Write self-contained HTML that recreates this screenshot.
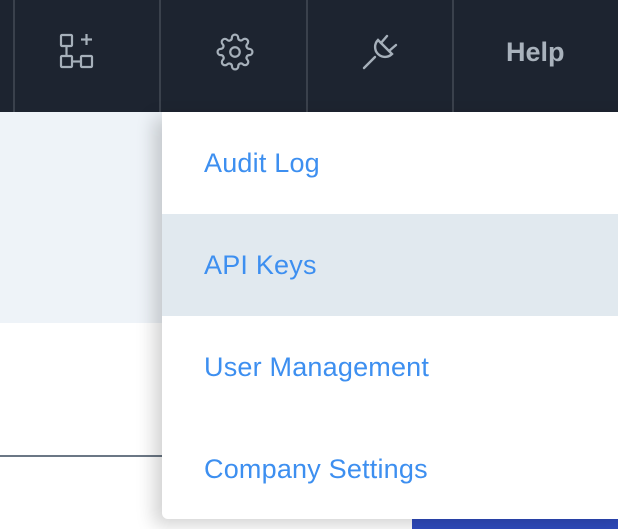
<!DOCTYPE html>
<html><head><style>
body{margin:0;width:618px;height:526px;overflow:hidden;position:relative;background:#fff;font-family:"Liberation Sans",sans-serif}
.nav{position:absolute;left:0;top:0;width:618px;height:112px;background:#1d2430}
.div{position:absolute;top:0;width:2px;height:112px;background:#3a414c}
.left{position:absolute;left:0;top:112px;width:170px;height:211px;background:#eef3f8}
.line{position:absolute;left:0;top:455px;width:170px;height:2px;background:#6b7785}
.btn{position:absolute;left:412px;top:519px;width:206px;height:10px;background:#2f4bbf}
.menu{position:absolute;left:162px;top:112px;width:470px;height:407px;background:#fff;border-radius:0 0 6px 6px;box-shadow:-8px 6px 18px rgba(0,0,0,.18)}
.it{height:102px;line-height:102px;padding-left:42px;color:#3d8ff0;font-size:27px;letter-spacing:0.2px}
.hl{background:#e1e9ef}
svg{position:absolute}
</style></head><body>
<div class="nav">
<div class="div" style="left:13px"></div><div class="div" style="left:159px"></div><div class="div" style="left:306px"></div><div class="div" style="left:452px"></div>
<svg style="left:58px;top:30px" width="60" height="45" viewBox="0 0 60 45" fill="none" stroke="#a6b0ba" stroke-width="2.2">
<rect x="3" y="5" width="11" height="11" rx="1"/><line x1="8.5" y1="16" x2="8.5" y2="26"/><rect x="3" y="26" width="11" height="11" rx="1"/><line x1="14" y1="31.5" x2="23" y2="31.5"/><rect x="23" y="26" width="11" height="11" rx="1"/><line x1="28.5" y1="4" x2="28.5" y2="15"/><line x1="23" y1="9.5" x2="34" y2="9.5"/></svg>
<svg style="left:216px;top:33px" width="38" height="38" viewBox="0 0 24 24" fill="none" stroke="#a6b0ba" stroke-width="1.4"><circle cx="12" cy="12" r="3"/><path d="M19.4 15a1.65 1.65 0 0 0 .33 1.820l.06.06a2 2 0 1 1-2.83 2.83l-.06-.06a1.65 1.65 0 0 0-1.82-.33 1.65 1.65 0 0 0-1 1.51V21a2 2 0 1 1-4 0v-.09A1.65 1.65 0 0 0 9 19.4a1.65 1.65 0 0 0-1.820.33l-.06.06a2 2 0 1 1-2.83-2.83l.06-.06A1.65 1.65 0 0 0 4.68 15a1.65 1.65 0 0 0-1.51-1H3a2 2 0 1 1 0-4h.09A1.65 1.65 0 0 0 4.6 9a1.650 1.65 0 0 0-.33-1.82l-.06-.06a2 2 0 1 1 2.83-2.830l.06.06A1.65 1.65 0 0 0 9 4.68 1.65 1.65 0 0 0 10 3.17V3a2 2 0 1 1 4 0v.09a1.65 1.65 0 0 0 1 1.51 1.65 1.65 0 0 0 1.82-.33l.06-.06a2 2 0 1 1 2.83 2.83l-.06.06A1.65 1.65 0 0 0 19.4 9a1.65 1.65 0 0 0 1.510 1H21a2 2 0 1 1 0 4h-.09a1.65 1.65 0 0 0-1.51 1z"/></svg>
<svg style="left:0;top:0" width="618" height="112" fill="none" stroke="#a6b0ba" stroke-width="2.4" stroke-linecap="round"><path d="M378 40 L392 54 A9.9 9.9 0 0 1 378 54 A9.9 9.9 0 0 1 378 40 Z"/><path d="M375 57 L364 68"/><path d="M381 43 L387 36"/><path d="M389 51 L396 45"/></svg>
<div style="position:absolute;left:506px;top:37px;color:#a9b2bc;font-size:27px;font-weight:bold">Help</div>
</div>
<div class="left"></div><div class="line"></div><div class="btn"></div>
<div class="menu"><div class="it">Audit Log</div><div class="it hl">API Keys</div><div class="it">User Management</div><div class="it">Company Settings</div></div>
</body></html>
